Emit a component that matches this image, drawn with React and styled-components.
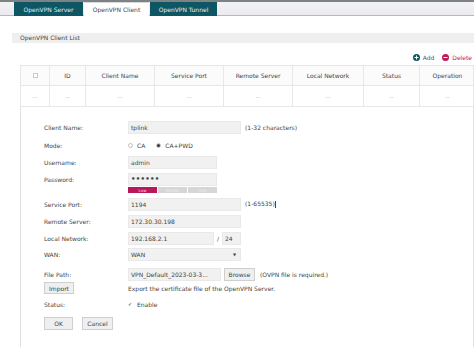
import React from "react";
import styled, { createGlobalStyle } from "styled-components";

const Global = createGlobalStyle`
  html, body { margin: 0; padding: 0; background: #fff; overflow: hidden; }
  body { font-family: "DejaVu Sans", Verdana, sans-serif; font-size: 6px; color: #444; }
  * { box-sizing: border-box; }
`;

const Page = styled.div`
  width: 474px;
  height: 347px;
  overflow: hidden;
  display: flex;
  flex-direction: column;
`;

const TopBar = styled.div`
  height: 2px;
  background: #7b8385;
`;

const TabStrip = styled.div`
  height: 15px;
  background: linear-gradient(#f3f2f5, #ebeaee);
  border-bottom: 1px solid #b8b8b8;
  display: flex;
  align-items: flex-end;
  padding-left: 14px;
  gap: 1px;
`;

const Tab = styled.div`
  height: 14px;
  margin-bottom: -1px;
  width: ${(p) => p.$w}px;
  display: flex;
  align-items: center;
  justify-content: center;
  background: ${(p) => (p.$active ? "#ffffff" : "#0f5664")};
  color: ${(p) => (p.$active ? "#444" : "#e6eef0")};
  border-top: 1px solid ${(p) => (p.$active ? "#d8d8d8" : "#0f5664")};
`;

const ListHeader = styled.div`
  margin: 17px 0 0 12px;
  height: 14px;
  background: #efefef;
  padding-left: 8px;
  display: flex;
  align-items: center;
  color: #444;
`;

const Toolbar = styled.div`
  margin-top: 10px;
  height: 12px;
  display: flex;
  justify-content: flex-end;
  align-items: center;
  gap: 8px;
  padding-right: 2px;
`;

const ToolButton = styled.div`
  display: flex;
  align-items: center;
  gap: 3px;
  color: ${(p) => p.$color};
`;

const TableWrap = styled.div`
  margin: 3px 0 0 20px;
  width: 454px;
`;

const TableRow = styled.div`
  display: grid;
  grid-template-columns: 28px 36px 69px 69px 69px 71px 56px 56px;
  height: 21px;
  border: 1px solid #e6e6e6;
  border-top: ${(p) => (p.$first ? "1px solid #e6e6e6" : "none")};
  background: ${(p) => (p.$head ? "#fbfbfb" : "#fff")};
`;

const Cell = styled.div`
  display: flex;
  align-items: center;
  justify-content: center;
  border-left: ${(p) => (p.$first ? "none" : "1px solid #e8e8e8")};
  color: ${(p) => (p.$muted ? "#c4c4c4" : "#444")};
`;

const SmallBox = styled.span`
  width: 5px;
  height: 5px;
  border: 1px solid #c9c9c9;
  background: #fff;
  display: inline-block;
`;

const Panel = styled.div`
  border-left: 1px solid #dde2e6;
  border-right: 1px solid #dde2e6;
  padding: 13px 0 0 23px;
  height: 240px;
`;

const Row = styled.div`
  display: flex;
  align-items: center;
  height: ${(p) => p.$h || 14}px;
  margin-top: ${(p) => p.$mt || 0}px;
`;

const Label = styled.div`
  width: 84px;
  color: #444;
`;

const Input = styled.div`
  width: ${(p) => p.$w}px;
  height: 13px;
  background: #f1f1f1;
  border: 1px solid #e9e9e9;
  padding-left: 2px;
  display: flex;
  align-items: center;
  justify-content: ${(p) => (p.$between ? "space-between" : "flex-start")};
  padding-right: ${(p) => (p.$between ? 4 : 0)}px;
  color: #444;
  letter-spacing: ${(p) => (p.$dots ? "0.3px" : "normal")};
  font-size: ${(p) => (p.$dots ? 7 : 6)}px;
  font-weight: ${(p) => (p.$dots ? "bold" : "normal")};
`;

const Hint = styled.span`
  margin-left: ${(p) => p.$ml || 4}px;
  color: #444;
`;

const Radio = styled.span`
  width: 5px;
  height: 5px;
  border-radius: 50%;
  border: 1px solid #bfbfbf;
  display: inline-flex;
  align-items: center;
  justify-content: center;
  margin-right: 4px;
  &::after {
    content: "";
    width: 3px;
    height: 3px;
    border-radius: 50%;
    background: ${(p) => (p.$on ? "#333" : "transparent")};
  }
`;

const Option = styled.span`
  display: inline-flex;
  align-items: center;
  margin-left: ${(p) => p.$ml || 0}px;
`;

const Strength = styled.div`
  display: flex;
  gap: 1px;
  margin-left: 84px;
`;

const Level = styled.div`
  width: ${(p) => p.$w}px;
  height: 6px;
  background: ${(p) => (p.$on ? "#b9175a" : "#d6d6d6")};
  color: ${(p) => (p.$on ? "#f5dbe6" : "#ececec")};
  font-size: 4px;
  display: flex;
  align-items: center;
  justify-content: center;
`;

const Slash = styled.span`
  width: 8px;
  text-align: center;
`;

const Caret = styled.span`
  font-size: 4px;
  color: #444;
`;

const Button = styled.div`
  height: ${(p) => p.$h || 12}px;
  width: ${(p) => p.$w}px;
  background: #efefef;
  border: 1px solid #cfcfcf;
  display: flex;
  align-items: center;
  justify-content: center;
  color: #444;
  margin-left: ${(p) => p.$ml || 0}px;
`;

const Check = styled.span`
  width: 5px;
  height: 5px;
  margin-right: 4px;
  font-size: 5px;
  line-height: 5px;
  color: #333;
`;

const Cursor = styled.span`
  display: inline-block;
  width: 1px;
  height: 7px;
  background: #444;
  vertical-align: middle;
`;

const cols = ["", "ID", "Client Name", "Service Port", "Remote Server", "Local Network", "Status", "Operation"];

function PlusIcon() {
  return (
    <svg width="7" height="7" viewBox="0 0 14 14">
      <circle cx="7" cy="7" r="7" fill="#0f5664" />
      <rect x="3" y="6" width="8" height="2" fill="#fff" />
      <rect x="6" y="3" width="2" height="8" fill="#fff" />
    </svg>
  );
}

function MinusIcon() {
  return (
    <svg width="7" height="7" viewBox="0 0 14 14">
      <circle cx="7" cy="7" r="7" fill="#c2185b" />
      <rect x="3" y="6" width="8" height="2" fill="#fff" />
    </svg>
  );
}

export default function App() {
  return (
    <Page>
      <Global />
      <TopBar />
      <TabStrip>
        <Tab $w={69}>OpenVPN Server</Tab>
        <Tab $w={65} $active>OpenVPN Client</Tab>
        <Tab $w={67}>OpenVPN Tunnel</Tab>
      </TabStrip>
      <ListHeader>OpenVPN Client List</ListHeader>
      <Toolbar>
        <ToolButton $color="#2f5f6b">
          <PlusIcon />
          Add
        </ToolButton>
        <ToolButton $color="#c2185b">
          <MinusIcon />
          Delete
        </ToolButton>
      </Toolbar>
      <TableWrap>
        <TableRow $head $first>
          {cols.map((c, i) => (
            <Cell key={i} $first={i === 0}>
              {i === 0 ? <SmallBox /> : c}
            </Cell>
          ))}
        </TableRow>
        <TableRow>
          {cols.map((c, i) => (
            <Cell key={i} $first={i === 0} $muted>
              --
            </Cell>
          ))}
        </TableRow>
        <Panel>
          <Row>
            <Label>Client Name:</Label>
            <Input $w={113}>tplink</Input>
            <Hint>(1-32 characters)</Hint>
          </Row>
          <Row $mt={4}>
            <Label>Mode:</Label>
            <Option>
              <Radio />
              CA
            </Option>
            <Option $ml={11}>
              <Radio $on />
              CA+PWD
            </Option>
          </Row>
          <Row $mt={3}>
            <Label>Username:</Label>
            <Input $w={89}>admin</Input>
          </Row>
          <Row $mt={3}>
            <Label>Password:</Label>
            <Input $w={89} $dots>
              ••••••
            </Input>
          </Row>
          <Row $h={6} $mt={1}>
            <Strength>
              <Level $w={29} $on>
                Low
              </Level>
              <Level $w={29}>Middle</Level>
              <Level $w={29}>High</Level>
            </Strength>
          </Row>
          <Row $mt={4}>
            <Label>Service Port:</Label>
            <Input $w={113}>1194</Input>
            <Hint>
              (1-65535)
              <Cursor />
            </Hint>
          </Row>
          <Row $mt={3}>
            <Label>Remote Server:</Label>
            <Input $w={113}>172.30.30.198</Input>
          </Row>
          <Row $mt={3}>
            <Label>Local Network:</Label>
            <Input $w={86}>192.168.2.1</Input>
            <Slash>/</Slash>
            <Input $w={19}>24</Input>
          </Row>
          <Row $mt={2}>
            <Label>WAN:</Label>
            <Input $w={113} $between>
              WAN
              <Caret>▼</Caret>
            </Input>
          </Row>
          <Row $mt={6}>
            <Label>File Path:</Label>
            <Input $w={93}>VPN_Default_2023-03-3...</Input>
            <Button $w={31} $h={13} $ml={3}>
              Browse
            </Button>
            <Hint $ml={5}>(OVPN file is required.)</Hint>
          </Row>
          <Row $mt={1} $h={12}>
            <Label>
              <Button $w={30}>Import</Button>
            </Label>
            Export the certificate file of the OpenVPN Server.
          </Row>
          <Row $mt={4} $h={12}>
            <Label>Status:</Label>
            <Option>
              <Check>✓</Check>
              Enable
            </Option>
          </Row>
          <Row $mt={7} $h={13}>
            <Button $w={29} $h={13}>
              OK
            </Button>
            <Button $w={31} $h={13} $ml={9}>
              Cancel
            </Button>
          </Row>
        </Panel>
      </TableWrap>
    </Page>
  );
}
